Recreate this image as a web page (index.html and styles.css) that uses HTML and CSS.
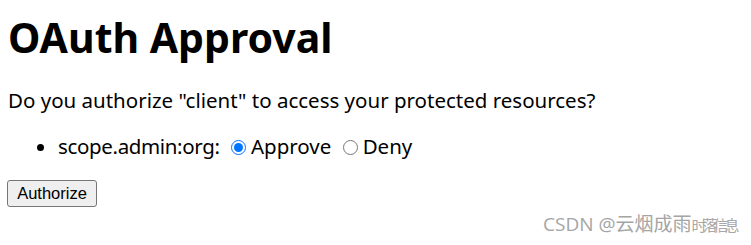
FILE: index.html
```html
<!DOCTYPE html>
<html>
<head>
<meta charset="utf-8">
<link rel="stylesheet" href="styles.css">
</head>
<body class="page">
<h1 class="title">OAuth Approval</h1>
<p class="question">Do you authorize "client" to access your protected resources?</p>
<form class="form">
<ul class="scopes">
<li class="scope"><span class="scope-name">scope.admin:org:</span> <input type="radio" name="s" checked class="radio">Approve <input type="radio" name="s" class="radio">Deny</li>
</ul>
<button type="button" class="submit">Authorize</button>
</form>
<div class="watermark">CSDN @云烟成雨<span class="mark-tail">时落信息</span></div>
</body>
</html>
```
FILE: styles.css
```css
html, body { background: #fff; }
.page {
  margin: 0;
  padding: 0 8px;
  font-family: "Noto Sans", "Noto Sans CJK SC", sans-serif;
  font-size: 20.5px;
  line-height: 27px;
  color: #000;
}
.title {
  font-size: 41px;
  line-height: 50px;
  font-weight: bold;
  margin: 12px 0 0;
}
.question { margin: 25px 0 0; }
.form { margin: 0; }
.scopes { margin: 19px 0 0; padding-left: 50px; }
.scope { height: 27px; }
.scope-name { letter-spacing: -0.35px; }
.radio {
  margin: 0 5px 0 6px;
  width: 15px;
  height: 15px;
  vertical-align: -1px;
  accent-color: #0075ff;
}
.submit {
  display: block;
  margin: 20px 0 0 -1px;
  font-family: "Liberation Sans", Arial, sans-serif;
  font-size: 16.5px;
  padding: 0 8px;
  width: 90px;
  height: 27px;
  background: #efefef;
  border: 1px solid #767676;
  border-radius: 3px;
  color: #000;
}
.watermark {
  position: absolute;
  left: 543px;
  top: 212px;
  font-family: "Open Sans", "Noto Sans CJK SC", sans-serif;
  font-size: 19px;
  line-height: 24px;
  color: #a5a5a5;
  white-space: nowrap;
}
.mark-tail {
  font-size: 15px;
  letter-spacing: -4px;
  color: #a8a8a8;
}
```
